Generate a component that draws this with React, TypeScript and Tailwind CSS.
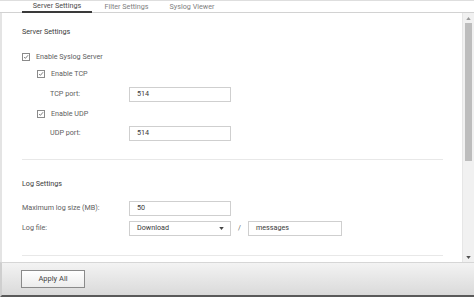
import React from 'react';

function Check({ label }: { label: string }) {
    return (
        <div className="flex items-center h-[16px]">
            <span className="w-[8px] h-[8px] border border-[#8a8a8a] bg-white flex items-center justify-center mr-[6px]">
                <svg viewBox="0 0 8 8" className="w-[8px] h-[8px]">
                    <path d="M1.5 4 L3.2 5.8 L6.8 1.6" fill="none" stroke="#555" strokeWidth="1" />
                </svg>
            </span>
            <span className="text-[#606060]">{label}</span>
        </div>
    );
}

function Field({ label, value, labelW }: { label: string; value: string; labelW: string }) {
    return (
        <div className="flex items-center h-[16px]">
            <span className={`${labelW} shrink-0 text-[#606060]`}>{label}</span>
            <div className="w-[102px] h-[15px] border border-[#cfcfcf] bg-white flex items-center pl-[7px] text-[#3a3a3a]">{value}</div>
        </div>
    );
}

export default function App() {
    return (
        <div className="w-[474px] h-[297px] flex flex-col bg-white overflow-hidden text-[7.2px] leading-none whitespace-nowrap" style={{ fontFamily: 'Roboto, "Liberation Sans", sans-serif' }}>
            {/* tabs */}
            <div className="h-[13px] shrink-0 flex border-t border-[#dedede] border-b border-b-[#d2d2d2] bg-white">
                <div className="ml-[22px] w-[70px] flex items-center justify-center text-[#4a4a4a] border-b-2 border-[#3a3a3a] -mb-px">Server Settings</div>
                <div className="ml-[12px] w-[45px] flex items-center justify-center text-[#808080]">Filter Settings</div>
                <div className="ml-[21px] w-[44px] flex items-center justify-center text-[#808080]">Syslog Viewer</div>
            </div>

            <div className="flex-1 flex min-h-0">
                {/* content */}
                <div className="flex-1 border-l-2 border-[#e4e4e4] pl-[20px] pr-[19px]">
                    <div className="mt-[11px] h-[16px] flex items-center text-[#3a3a3a]">Server Settings</div>
                    <div className="mt-[9px]"><Check label="Enable Syslog Server" /></div>
                    <div className="mt-[1px] ml-[15px]"><Check label="Enable TCP" /></div>
                    <div className="mt-[4px] ml-[28px]"><Field label="TCP port:" value="514" labelW="w-[79px]" /></div>
                    <div className="mt-[4px] ml-[15px]"><Check label="Enable UDP" /></div>
                    <div className="mt-[3px] ml-[28px]"><Field label="UDP port:" value="514" labelW="w-[79px]" /></div>
                    <div className="mt-[18px] h-px bg-[#e8e8e8]" />

                    <div className="mt-[16px] h-[16px] flex items-center text-[#3a3a3a]">Log Settings</div>
                    <div className="mt-[8px]"><Field label="Maximum log size (MB):" value="50" labelW="w-[107px]" /></div>
                    <div className="mt-[4px] flex items-center h-[16px]">
                        <span className="w-[107px] shrink-0 text-[#606060]">Log file:</span>
                        <div className="w-[102px] h-[15px] border border-[#cfcfcf] bg-white flex items-center pl-[7px] pr-[6px] text-[#3a3a3a]">
                            <span className="flex-1">Download</span>
                            <svg viewBox="0 0 6 4" className="w-[5px] h-[3px]"><path d="M0 0 H6 L3 4 Z" fill="#444" /></svg>
                        </div>
                        <span className="w-[17px] text-center text-[#666]">/</span>
                        <div className="w-[94px] h-[15px] border border-[#cfcfcf] bg-white flex items-center pl-[7px] text-[#3a3a3a]">messages</div>
                    </div>
                    <div className="mt-[19px] h-px bg-[#e8e8e8]" />
                </div>

                {/* scrollbar */}
                <div className="w-[12px] shrink-0 bg-[#f1f1f1] border-l border-[#e6e6e6] flex flex-col items-center">
                    <div className="h-[10px] w-full flex items-center justify-center">
                        <svg viewBox="0 0 6 4" className="w-[5px] h-[3px]"><path d="M0 4 H6 L3 0 Z" fill="#9a9a9a" /></svg>
                    </div>
                    <div className="w-[7px] h-[138px] bg-[#bdbdbd]" />
                    <div className="flex-1" />
                    <div className="h-[10px] w-full flex items-center justify-center">
                        <svg viewBox="0 0 6 4" className="w-[5px] h-[3px]"><path d="M0 0 H6 L3 4 Z" fill="#505050" /></svg>
                    </div>
                </div>
            </div>

            {/* footer */}
            <div className="h-[35px] shrink-0 border-t border-[#d6d6d6] border-l-2 border-l-[#cfcfcf] border-b-2 border-b-[#5a5a5a] bg-gradient-to-b from-[#f3f3f3] to-[#dadada] flex items-center pl-[19px]">
                <button className="w-[64px] h-[18px] border border-[#8a8a8a] bg-gradient-to-b from-white to-[#ececec] text-[#444] text-[7.5px]">Apply All</button>
            </div>
        </div>
    );
}
